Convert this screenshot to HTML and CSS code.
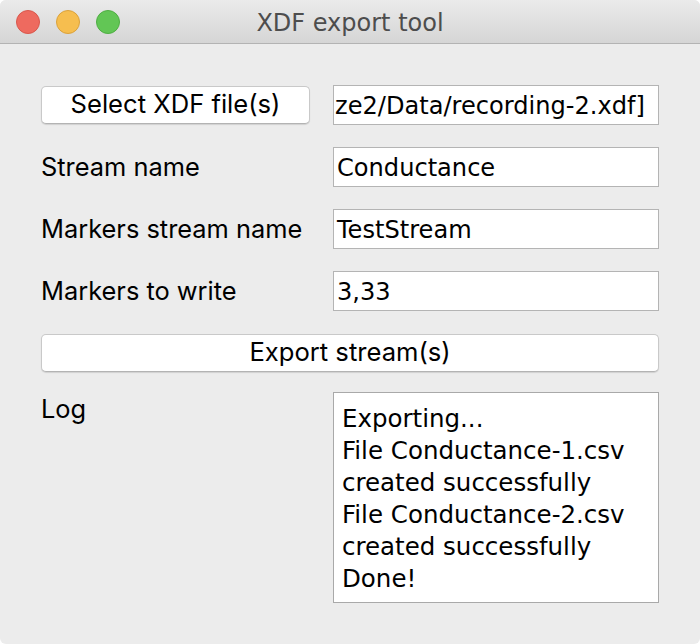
FILE: index.html
```html
<!DOCTYPE html>
<html lang="en">
<head>
<meta charset="utf-8">
<title>XDF export tool</title>
<link rel="stylesheet" href="styles.css">
</head>
<body>
<div class="window">
  <header class="titlebar">
    <div class="lights">
      <span class="light close"></span>
      <span class="light minimize"></span>
      <span class="light maximize"></span>
    </div>
    <div class="title">XDF export tool</div>
    <div class="spacer"></div>
  </header>
  <main class="form">
    <button class="btn">Select XDF file(s)</button>
    <div class="field scrolled">ze2/Data/recording-2.xdf]</div>

    <div class="label">Stream name</div>
    <div class="field">Conductance</div>

    <div class="label">Markers stream name</div>
    <div class="field">TestStream</div>

    <div class="label">Markers to write</div>
    <div class="field">3,33</div>

    <button class="btn wide">Export stream(s)</button>

    <div class="label log-label">Log</div>
    <div class="log">Exporting...<br>File Conductance-1.csv<br>created successfully<br>File Conductance-2.csv<br>created successfully<br>Done!</div>
  </main>
</div>
</body>
</html>
```
FILE: styles.css
```css
html, body {
  margin: 0;
  padding: 0;
  background: #ffffff;
}

.window {
  width: 700px;
  height: 644px;
  background: #ececec;
  border-radius: 6px;
  overflow: hidden;
  box-sizing: border-box;
}

.titlebar {
  height: 44px;
  box-sizing: border-box;
  border-bottom: 1px solid #b3b3b3;
  background: linear-gradient(#ebebeb, #d5d5d5);
  display: grid;
  grid-template-columns: 1fr auto 1fr;
  align-items: center;
}

.lights {
  display: flex;
  gap: 16px;
  padding-left: 16px;
}

.light {
  width: 24px;
  height: 24px;
  border-radius: 50%;
  box-sizing: border-box;
}

.close {
  background: #ee6a5f;
  border: 1px solid #d9574c;
}

.minimize {
  background: #f6be4f;
  border: 1px solid #dba23b;
}

.maximize {
  background: #62c655;
  border: 1px solid #4fae43;
}

.title {
  font-family: "DejaVu Sans", sans-serif;
  font-size: 24px;
  color: #4d4d4d;
  line-height: 28px;
  padding-top: 2px;
}

.form {
  display: grid;
  grid-template-columns: 269px 326px;
  grid-template-rows: repeat(5, 40px) 211px;
  column-gap: 23px;
  row-gap: 22px;
  padding: 41px 41px 0 41px;
}

.btn {
  margin: 1px 0;
  padding: 0 0 3px 0;
  background: #ffffff;
  border: 1px solid #c9c9c9;
  border-bottom-color: #b3b3b3;
  border-radius: 5px;
  box-shadow: 0 1px 1px rgba(0, 0, 0, 0.12);
  font-family: "Inter", "Liberation Sans", sans-serif;
  font-size: 25.6px;
  color: #000000;
}

.wide {
  grid-column: 1 / 3;
}

.label {
  align-self: center;
  font-family: "Inter", "Liberation Sans", sans-serif;
  font-size: 25.4px;
  line-height: 30px;
  color: #000000;
}

.field {
  box-sizing: border-box;
  height: 40px;
  background: #ffffff;
  border: 1px solid #b4b4b4;
  padding: 2px 3px 0 3px;
  font-family: "DejaVu Sans", sans-serif;
  font-size: 24.1px;
  line-height: 36px;
  color: #000000;
  white-space: nowrap;
  overflow: hidden;
}

.scrolled {
  padding-left: 1px;
}

.log-label {
  align-self: start;
  margin-top: -3px;
  padding-top: 2px;
}

.log {
  margin-top: -3px;
  box-sizing: border-box;
  height: 211px;
  background: #ffffff;
  border: 1px solid #a9a9a9;
  padding: 10px 8px;
  font-family: "DejaVu Sans", sans-serif;
  font-size: 24.5px;
  line-height: 32px;
  color: #000000;
}
```
